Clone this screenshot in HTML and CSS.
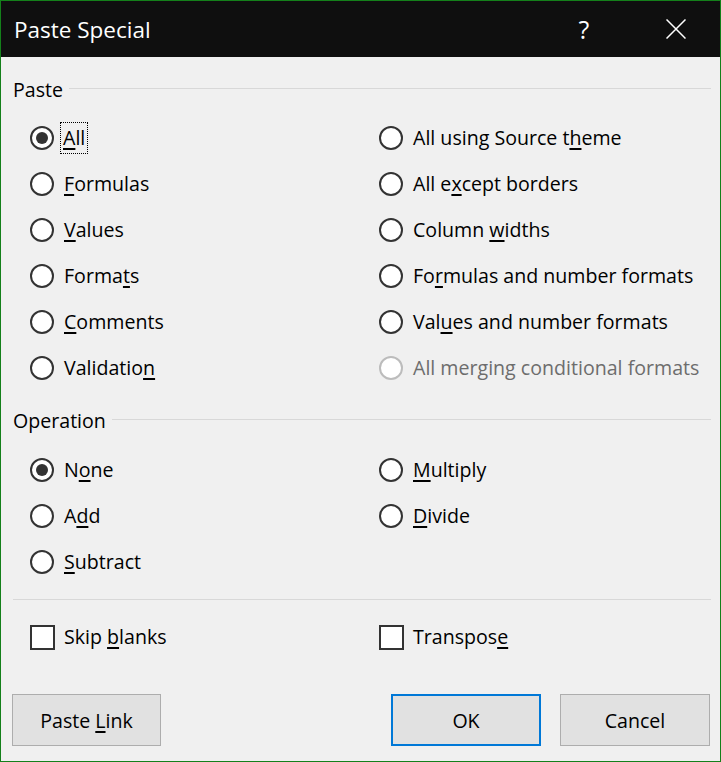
FILE: index.html
```html
<!DOCTYPE html>
<html lang="en">
<head>
<meta charset="utf-8">
<title>Paste Special</title>
<link rel="stylesheet" href="styles.css">
</head>
<body>
<div class="window">
  <div class="titlebar">
    <span class="title">Paste Special</span>
    <span class="help">?</span>
    <span class="close">
      <svg width="20" height="20" viewBox="0 0 20 20"><path d="M0.5 0.5 L19.5 19.5 M19.5 0.5 L0.5 19.5" stroke="#ffffff" stroke-width="1.5" fill="none"/></svg>
    </span>
  </div>
  <div class="content">
    <div class="group-head first"><span>Paste</span><span class="rule"></span></div>
    <div class="options">
      <div class="opt"><span class="radio checked"></span><span class="label focus"><u>A</u>ll</span></div>
      <div class="opt"><span class="radio"></span><span class="label">All using Source t<u>h</u>eme</span></div>
      <div class="opt"><span class="radio"></span><span class="label"><u>F</u>ormulas</span></div>
      <div class="opt"><span class="radio"></span><span class="label">All e<u>x</u>cept borders</span></div>
      <div class="opt"><span class="radio"></span><span class="label"><u>V</u>alues</span></div>
      <div class="opt"><span class="radio"></span><span class="label">Column <u>w</u>idths</span></div>
      <div class="opt"><span class="radio"></span><span class="label">Forma<u>t</u>s</span></div>
      <div class="opt"><span class="radio"></span><span class="label">Fo<u>r</u>mulas and number formats</span></div>
      <div class="opt"><span class="radio"></span><span class="label"><u>C</u>omments</span></div>
      <div class="opt"><span class="radio"></span><span class="label">Val<u>u</u>es and number formats</span></div>
      <div class="opt"><span class="radio"></span><span class="label">Validatio<u>n</u></span></div>
      <div class="opt disabled"><span class="radio"></span><span class="label">All merging conditional formats</span></div>
    </div>
    <div class="group-head second"><span>Operation</span><span class="rule"></span></div>
    <div class="options ops">
      <div class="opt"><span class="radio checked"></span><span class="label">N<u>o</u>ne</span></div>
      <div class="opt"><span class="radio"></span><span class="label"><u>M</u>ultiply</span></div>
      <div class="opt"><span class="radio"></span><span class="label">A<u>d</u>d</span></div>
      <div class="opt"><span class="radio"></span><span class="label"><u>D</u>ivide</span></div>
      <div class="opt"><span class="radio"></span><span class="label"><u>S</u>ubtract</span></div>
    </div>
    <div class="separator"></div>
    <div class="options checks">
      <div class="opt"><span class="check"></span><span class="label">Skip <u>b</u>lanks</span></div>
      <div class="opt"><span class="check"></span><span class="label">Transpos<u>e</u></span></div>
    </div>
    <div class="buttons">
      <button class="btn">Paste <u>L</u>ink</button>
      <span class="spacer"></span>
      <button class="btn default">OK</button>
      <button class="btn">Cancel</button>
    </div>
  </div>
</div>
</body>
</html>
```

FILE: styles.css
```css
html, body {
  margin: 0;
  padding: 0;
  background: #f0f0f0;
}

body {
  font-family: "Segoe UI", "Open Sans", "Noto Sans", sans-serif;
  font-size: 19.6px;
  color: #000;
}

.window {
  width: 721px;
  height: 762px;
  box-sizing: border-box;
  border: 1px solid #14801a;
  background: #f0f0f0;
  display: flex;
  flex-direction: column;
}

.titlebar {
  height: 56px;
  background: #0f0f0f;
  color: #fff;
  display: flex;
  align-items: center;
  padding-left: 13px;
  flex-shrink: 0;
}

.title {
  font-size: 22.5px;
  flex: 1;
}

.help {
  width: 46px;
  text-align: center;
  font-size: 25px;
  margin-right: 25px;
  line-height: 1;
}

.close {
  width: 88px;
  display: flex;
  justify-content: center;
  align-items: center;
}

.close svg {
  display: block;
}

.content {
  padding: 0 9px 0 12px;
  display: flex;
  flex-direction: column;
}

.group-head {
  display: flex;
  align-items: center;
  height: 24px;
  line-height: 24px;
}

.group-head.first {
  margin-top: 21px;
}

.group-head.second {
  margin-top: 18px;
}

.rule {
  flex: 1;
  height: 1px;
  background: #d8d8d8;
  margin-left: 6px;
  margin-top: -3px;
}

.options {
  display: grid;
  grid-template-columns: 349px 1fr;
  margin-left: 17px;
  margin-top: 13px;
}

.options.ops {
  margin-top: 14px;
}

.options.checks {
  margin-top: 14px;
}

.opt {
  height: 46px;
  display: flex;
  align-items: center;
  white-space: nowrap;
}

.radio {
  width: 24px;
  height: 24px;
  box-sizing: border-box;
  border: 2px solid #333;
  border-radius: 50%;
  background: #fff;
  display: flex;
  align-items: center;
  justify-content: center;
  margin-right: 10px;
  flex-shrink: 0;
}

.radio.checked::after {
  content: "";
  width: 12px;
  height: 12px;
  border-radius: 50%;
  background: #333;
}

.check {
  width: 25px;
  height: 25px;
  box-sizing: border-box;
  border: 2px solid #333;
  background: #fff;
  margin-right: 9px;
  flex-shrink: 0;
}

.label {
  line-height: 26px;
}

.label.focus {
  outline: 1px dotted #000;
  outline-offset: 1px;
  padding: 1px 1px;
  margin-left: -2px;
}

u {
  text-decoration: underline;
  text-decoration-thickness: 2px;
  text-underline-offset: 3px;
}

.disabled .radio {
  border-color: #bcbcbc;
}

.disabled .label {
  color: #6d6d6d;
}

.separator {
  height: 1px;
  background: #d8d8d8;
  margin-top: 14px;
  margin-left: 0;
}

.buttons {
  display: flex;
  margin-top: 34px;
  margin-left: -1px;
  margin-right: 1px;
  gap: 19px;
}

.spacer {
  flex: 1;
}

.btn {
  width: 149px;
  height: 52px;
  box-sizing: border-box;
  border: 1px solid #adadad;
  background: #e1e1e1;
  font-family: inherit;
  font-size: 19.6px;
  color: #000;
  padding: 0;
  margin: 0;
}

.btn.default {
  width: 150px;
  border: 2px solid #0078d7;
}

.buttons .btn:last-child {
  width: 150px;
}
```
